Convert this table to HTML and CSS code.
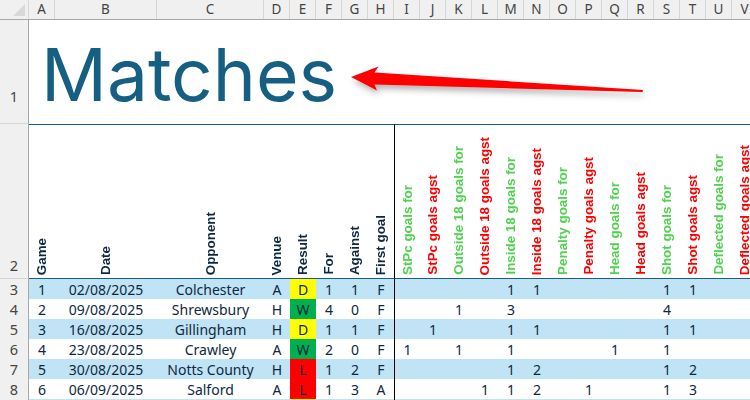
FILE: index.html
```html
<!DOCTYPE html>
<html>
<head>
<meta charset="utf-8">
<link rel="stylesheet" href="styles.css">
</head>
<body>
<div class="sheet">
  <div class="row colhdr">
    <div class="corner"><span class="tri"></span></div>
    <div class="ch">A</div><div class="ch">B</div><div class="ch">C</div><div class="ch">D</div><div class="ch">E</div><div class="ch">F</div><div class="ch">G</div><div class="ch">H</div><div class="ch">I</div><div class="ch">J</div><div class="ch">K</div><div class="ch">L</div><div class="ch">M</div><div class="ch">N</div><div class="ch">O</div><div class="ch">P</div><div class="ch">Q</div><div class="ch">R</div><div class="ch">S</div><div class="ch">T</div><div class="ch">U</div><div class="ch">V</div>
  </div>
  <div class="row r1">
    <div class="rh rh1">1</div>
    <div class="title">Matches</div>
  </div>
  <div class="row r2">
    <div class="rh rh2">2</div>
    <div class="hc"><span>Game</span></div>
    <div class="hc"><span>Date</span></div>
    <div class="hc"><span>Opponent</span></div>
    <div class="hc"><span>Venue</span></div>
    <div class="hc"><span>Result</span></div>
    <div class="hc"><span>For</span></div>
    <div class="hc"><span>Against</span></div>
    <div class="hc"><span>First goal</span></div>
    <div class="hc sep green"><span>StPc goals for</span></div>
    <div class="hc red"><span>StPc goals agst</span></div>
    <div class="hc green"><span>Outside 18 goals for</span></div>
    <div class="hc red"><span>Outside 18 goals agst</span></div>
    <div class="hc green"><span>Inside 18 goals for</span></div>
    <div class="hc red"><span>Inside 18 goals agst</span></div>
    <div class="hc green"><span>Penalty goals for</span></div>
    <div class="hc red"><span>Penalty goals agst</span></div>
    <div class="hc green"><span>Head goals for</span></div>
    <div class="hc red"><span>Head goals agst</span></div>
    <div class="hc green"><span>Shot goals for</span></div>
    <div class="hc red"><span>Shot goals agst</span></div>
    <div class="hc green"><span>Deflected goals for</span></div>
    <div class="hc red"><span>Deflected goals agst</span></div>
  </div>

  <div class="row data band">
    <div class="rh">3</div>
    <div class="c">1</div><div class="c">02/08/2025</div><div class="c">Colchester</div><div class="c">A</div><div class="c res draw">D</div><div class="c">1</div><div class="c">1</div><div class="c">F</div>
    <div class="c sep"></div><div class="c"></div><div class="c"></div><div class="c"></div><div class="c">1</div><div class="c">1</div><div class="c"></div><div class="c"></div><div class="c"></div><div class="c"></div><div class="c">1</div><div class="c">1</div><div class="c"></div><div class="c"></div>
  </div>
  <div class="row data">
    <div class="rh">4</div>
    <div class="c">2</div><div class="c">09/08/2025</div><div class="c">Shrewsbury</div><div class="c">H</div><div class="c res win">W</div><div class="c">4</div><div class="c">0</div><div class="c">F</div>
    <div class="c sep"></div><div class="c"></div><div class="c">1</div><div class="c"></div><div class="c">3</div><div class="c"></div><div class="c"></div><div class="c"></div><div class="c"></div><div class="c"></div><div class="c">4</div><div class="c"></div><div class="c"></div><div class="c"></div>
  </div>
  <div class="row data band">
    <div class="rh">5</div>
    <div class="c">3</div><div class="c">16/08/2025</div><div class="c">Gillingham</div><div class="c">H</div><div class="c res draw">D</div><div class="c">1</div><div class="c">1</div><div class="c">F</div>
    <div class="c sep"></div><div class="c">1</div><div class="c"></div><div class="c"></div><div class="c">1</div><div class="c">1</div><div class="c"></div><div class="c"></div><div class="c"></div><div class="c"></div><div class="c">1</div><div class="c">1</div><div class="c"></div><div class="c"></div>
  </div>
  <div class="row data">
    <div class="rh">6</div>
    <div class="c">4</div><div class="c">23/08/2025</div><div class="c">Crawley</div><div class="c">A</div><div class="c res win">W</div><div class="c">2</div><div class="c">0</div><div class="c">F</div>
    <div class="c sep">1</div><div class="c"></div><div class="c">1</div><div class="c"></div><div class="c">1</div><div class="c"></div><div class="c"></div><div class="c"></div><div class="c">1</div><div class="c"></div><div class="c">1</div><div class="c"></div><div class="c"></div><div class="c"></div>
  </div>
  <div class="row data band">
    <div class="rh">7</div>
    <div class="c">5</div><div class="c">30/08/2025</div><div class="c">Notts County</div><div class="c">H</div><div class="c res loss">L</div><div class="c">1</div><div class="c">2</div><div class="c">F</div>
    <div class="c sep"></div><div class="c"></div><div class="c"></div><div class="c"></div><div class="c">1</div><div class="c">2</div><div class="c"></div><div class="c"></div><div class="c"></div><div class="c"></div><div class="c">1</div><div class="c">2</div><div class="c"></div><div class="c"></div>
  </div>
  <div class="row data">
    <div class="rh">8</div>
    <div class="c">6</div><div class="c">06/09/2025</div><div class="c">Salford</div><div class="c">A</div><div class="c res loss">L</div><div class="c">1</div><div class="c">3</div><div class="c">A</div>
    <div class="c sep"></div><div class="c"></div><div class="c"></div><div class="c">1</div><div class="c">1</div><div class="c">2</div><div class="c"></div><div class="c">1</div><div class="c"></div><div class="c"></div><div class="c">1</div><div class="c">3</div><div class="c"></div><div class="c"></div>
  </div>
  <div class="row data band">
    <div class="rh"></div>
    <div class="c"></div><div class="c"></div><div class="c"></div><div class="c"></div><div class="c res draw"></div><div class="c"></div><div class="c"></div><div class="c"></div>
    <div class="c sep"></div>
  </div>

  <svg class="arrow" width="750" height="130" viewBox="0 0 750 130" xmlns="http://www.w3.org/2000/svg">
    <defs>
      <filter id="sh" x="-10%" y="-50%" width="120%" height="250%">
        <feDropShadow dx="2" dy="4" stdDeviation="3" flood-color="#000" flood-opacity="0.3"/>
      </filter>
    </defs>
    <polygon filter="url(#sh)" fill="#ff0000" points="351,77 378.5,66.5 374.5,72.5 643,90 642.5,92 374.5,84.5 377,90.5"/>
  </svg>
</div>
</body>
</html>
```

FILE: styles.css
```css
html, body {
  margin: 0;
  padding: 0;
  background: #ffffff;
  overflow: hidden;
}

.sheet {
  position: relative;
  width: 760px;
  display: flex;
  flex-direction: column;
  font-family: "Noto Sans", sans-serif;
  color: #0e2841;
}

.row {
  display: grid;
  grid-template-columns: 29px 26px 102px 107px repeat(19, 26px);
  box-sizing: border-box;
}

/* column header strip */
.colhdr {
  height: 20px;
  background: #f0f0f0;
  border-bottom: 1px solid #a8a8a8;
}

.corner {
  position: relative;
  border-right: 1px solid #d6d6d6;
}

.tri {
  position: absolute;
  right: 3px;
  bottom: 3px;
  width: 0;
  height: 0;
  border-left: 12px solid transparent;
  border-bottom: 12px solid #d8d8d8;
}

.ch {
  display: flex;
  align-items: center;
  justify-content: center;
  font-size: 13.5px;
  color: #444444;
  border-right: 1px solid #d6d6d6;
  line-height: 1;
}

/* row headers */
.rh {
  box-sizing: border-box;
  background: #f0f0f0;
  border-right: 1px solid #a8a8a8;
  border-bottom: 1px solid #d6d6d6;
  color: #444444;
  font-size: 14.5px;
  display: flex;
  align-items: center;
  justify-content: center;
}

.r1 {
  height: 104px;
}

.rh1 {
  align-items: flex-end;
  padding-bottom: 17px;
}

.title {
  grid-column: 2 / -1;
  font-family: "Inter", "Noto Sans", sans-serif;
  font-size: 73px;
  line-height: 73px;
  color: #156082;
  padding-top: 18px;
  padding-left: 12px;
}

.r2 {
  height: 155px;
}

.rh2 {
  align-items: flex-end;
  padding-bottom: 3px;
}

.hc {
  box-sizing: border-box;
  border-top: 1px solid #156082;
  border-bottom: 1px solid #156082;
  display: flex;
  align-items: flex-end;
  justify-content: center;
  padding-bottom: 3px;
  font-family: "Liberation Sans", Arial, sans-serif;
  font-weight: bold;
  font-size: 13.4px;
  color: #0e2841;
  overflow: visible;
}

.hc span {
  writing-mode: vertical-rl;
  transform: rotate(180deg);
  line-height: 14px;
  white-space: nowrap;
}

.hc.green {
  color: #4fd24f;
}

.hc.red {
  color: #ff0000;
}

.sep {
  border-left: 1px solid #000000;
}

.data {
  height: 20px;
}

.band {
  background: #c0e4f5;
}

.data .rh {
  background: #f0f0f0;
}

.c {
  box-sizing: border-box;
  display: flex;
  align-items: center;
  justify-content: center;
  font-size: 14px;
  line-height: 1;
  white-space: nowrap;
}

.res.draw {
  background: #ffff00;
}

.res.win {
  background: #00b050;
}

.res.loss {
  background: #ff0000;
}

.arrow {
  position: absolute;
  left: 0;
  top: 0;
  pointer-events: none;
}
```
